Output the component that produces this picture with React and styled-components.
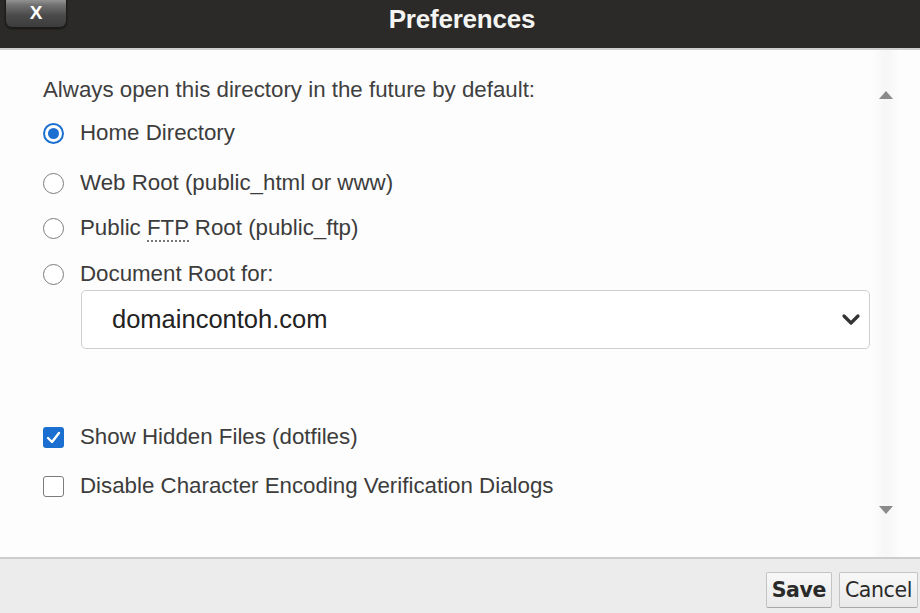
import React from "react";
import styled, { createGlobalStyle } from "styled-components";

const Global = createGlobalStyle`
  html, body { margin: 0; padding: 0; }
  body { width: 920px; height: 613px; overflow: hidden; font-family: "Liberation Sans", Arial, sans-serif; background: #fff; }
  #root { height: 613px; }
`;

const Dialog = styled.div`
  display: flex;
  flex-direction: column;
  width: 920px;
  height: 613px;
`;

const Header = styled.div`
  position: relative;
  height: 48px;
  flex: 0 0 48px;
  background: #2b2a29;
  border-bottom: 2px solid #cfcfcf;
  display: flex;
  align-items: center;
  justify-content: center;
`;

const Title = styled.h1`
  margin: 0;
  margin-left: 4px;
  color: #f4f4f2;
  font-family: "Liberation Sans", Arial, sans-serif;
  font-weight: 700;
  font-size: 26px;
  letter-spacing: -0.2px;
  line-height: 1;
  margin-top: -10px;
`;

const CloseButton = styled.button`
  position: absolute;
  left: 5px;
  top: -2px;
  width: 62px;
  height: 30px;
  border: 1px solid #1c1c1c;
  border-top: none;
  border-radius: 0 0 7px 7px;
  background: linear-gradient(#a0a0a0 0%, #707070 25%, #4a4a4a 60%, #3c3c3c 100%);
  color: #fff;
  font-family: "Liberation Sans", Arial, sans-serif;
  font-weight: 700;
  font-size: 19px;
  line-height: 28px;
  padding: 0;
  text-align: center;
  box-shadow: 0 1px 2px rgba(0,0,0,0.5);
`;

const Body = styled.div`
  flex: 1;
  display: flex;
  background: #fdfdfd;
  padding: 0 20px 0 43px;
`;

const Content = styled.div`
  flex: 1;
  display: flex;
  flex-direction: column;
  padding-top: 28px;
  color: #3a3a3a;
  font-size: 22.3px;
`;

const Heading = styled.div`
  height: 24px;
  line-height: 24px;
  color: #404040;
`;

const Option = styled.label`
  display: flex;
  align-items: center;
  height: 24px;
  margin-top: ${(p) => p.$mt}px;
  gap: 16px;
  line-height: 24px;
  color: #3c3c3c;
`;

const Radio = styled.span`
  box-sizing: border-box;
  width: 21px;
  height: 21px;
  flex: 0 0 21px;
  border-radius: 50%;
  border: ${(p) => (p.$on ? "2px solid #1a6fd0" : "1.5px solid #7c7c7c")};
  background: #fff;
  display: flex;
  align-items: center;
  justify-content: center;
  &::after {
    content: "";
    display: ${(p) => (p.$on ? "block" : "none")};
    width: 11px;
    height: 11px;
    border-radius: 50%;
    background: #1a6fd0;
  }
`;

const Check = styled.span`
  box-sizing: border-box;
  width: 21px;
  height: 21px;
  flex: 0 0 21px;
  border-radius: 3px;
  border: ${(p) => (p.$on ? "none" : "1.5px solid #7c7c7c")};
  background: ${(p) => (p.$on ? "#1a6fd0" : "#fff")};
  display: flex;
  align-items: center;
  justify-content: center;
`;

const Abbr = styled.span`
  border-bottom: 2px dotted #777;
  line-height: 18px;
  margin-top: 2px;
`;

const Select = styled.div`
  box-sizing: border-box;
  margin: 4px 0 0 38px;
  height: 59px;
  border: 1.5px solid #cfcfcf;
  border-radius: 5px;
  background: #fff;
  display: flex;
  align-items: center;
  justify-content: space-between;
  padding: 0 8px 0 30px;
  font-size: 25.5px;
  color: #222;
`;

const ChecksGroup = styled.div`
  display: flex;
  flex-direction: column;
  margin-top: 76px;
`;

const Scroll = styled.div`
  width: 28px;
  margin-left: 2px;
  display: flex;
  flex-direction: column;
  align-items: center;
  justify-content: space-between;
  padding: 40px 0 42px;
  background: linear-gradient(90deg, #fdfdfd, #f7f7f7 40%, #f7f7f7 60%, #fdfdfd);
`;

const Footer = styled.div`
  flex: 0 0 56px;
  height: 56px;
  background: #ececec;
  border-top: 2px solid #cdcdcd;
  display: flex;
  justify-content: flex-end;
  align-items: flex-start;
  padding-top: 13px;
  box-sizing: border-box;
  gap: 7px;
  padding-right: 2px;
`;

const Btn = styled.button`
  height: 36px;
  padding: 0 ${(p) => (p.$bold ? "5px" : "5px")};
  border: 1px solid #c4c4c4;
  border-bottom-color: #a8a8a8;
  border-radius: 2px;
  background: linear-gradient(#f8f8f8, #e9e9e9);
  font-family: "DejaVu Sans", Verdana, sans-serif;
  font-size: 20.5px;
  font-weight: ${(p) => (p.$bold ? 700 : 400)};
  color: #2a2a2a;
  letter-spacing: -0.4px;
`;

const Tri = ({ down }) => (
  <svg width="16" height="10" viewBox="0 0 16 10">
    <path d={down ? "M1 1 L15 1 L8 9 Z" : "M1 9 L15 9 L8 1 Z"} fill="#8a8a8a" />
  </svg>
);

export default function App() {
  return (
    <>
      <Global />
      <Dialog>
        <Header>
          <CloseButton>X</CloseButton>
          <Title>Preferences</Title>
        </Header>
        <Body>
          <Content>
            <Heading>Always open this directory in the future by default:</Heading>
            <Option $mt={19}>
              <Radio $on />
              Home Directory
            </Option>
            <Option $mt={26}>
              <Radio />
              Web Root (public_html or www)
            </Option>
            <Option $mt={21}>
              <Radio />
              <span>
                Public <Abbr>FTP</Abbr> Root (public_ftp)
              </span>
            </Option>
            <Option $mt={22}>
              <Radio />
              Document Root for:
            </Option>
            <Select>
              domaincontoh.com
              <svg width="20" height="14" viewBox="0 0 20 14">
                <path d="M3 3 L10 10 L17 3" stroke="#333" strokeWidth="3.2" fill="none" strokeLinecap="round" strokeLinejoin="round" />
              </svg>
            </Select>
            <ChecksGroup>
              <Option $mt={0}>
                <Check $on>
                  <svg width="15" height="13" viewBox="0 0 15 13">
                    <path d="M2 7 L6 11 L13 2" stroke="#fff" strokeWidth="2.4" fill="none" strokeLinecap="round" strokeLinejoin="round" />
                  </svg>
                </Check>
                Show Hidden Files (dotfiles)
              </Option>
              <Option $mt={25}>
                <Check />
                Disable Character Encoding Verification Dialogs
              </Option>
            </ChecksGroup>
          </Content>
          <Scroll>
            <Tri />
            <Tri down />
          </Scroll>
        </Body>
        <Footer>
          <Btn $bold>Save</Btn>
          <Btn>Cancel</Btn>
        </Footer>
      </Dialog>
    </>
  );
}
